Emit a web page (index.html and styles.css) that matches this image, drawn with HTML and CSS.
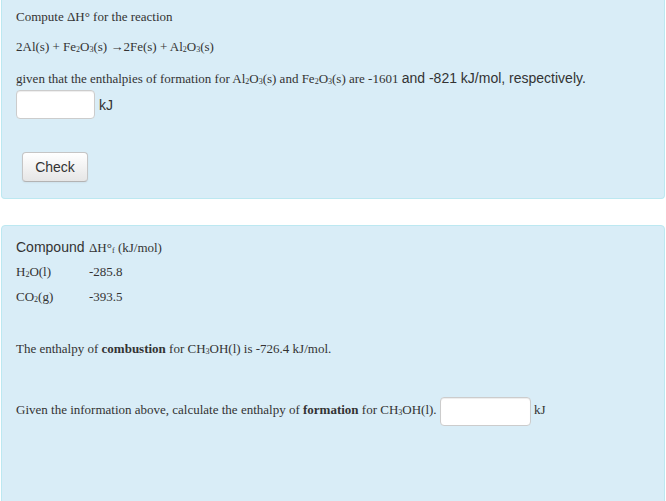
FILE: index.html
```html
<!DOCTYPE html>
<html lang="en">

<head>
    <meta charset="UTF-8">
    <meta name="viewport" content="width=device-width, initial-scale=1.0">
    <title>Enthalpy Problems</title>
    <link rel="stylesheet" href="styles.css">
</head>

<body>
    <div class="well first">
        <p>Compute &Delta;H&deg; for the reaction</p>
        <p>2Al(s) + Fe<sub>2</sub>O<sub>3</sub>(s) &rarr;2Fe(s) + Al<sub>2</sub>O<sub>3</sub>(s)</p>
        <p>given that the enthalpies of formation for Al<sub>2</sub>O<sub>3</sub>(s) and Fe<sub>2</sub>O<sub>3</sub>(s) are -1601 <span class="sans">and -821 kJ/mol, respectively.</span></p>
        <div class="answer">
            <input type="text" class="box">
            <span class="sans">kJ</span>
        </div>
        <button type="button" class="btn">Check</button>
    </div>

    <div class="well second">
        <table class="data">
            <tr>
                <th><span class="sans">Compound</span></th>
                <th>&Delta;H&deg;<sub>f</sub> (kJ/mol)</th>
            </tr>
            <tr>
                <td>H<sub>2</sub>O(l)</td>
                <td>-285.8</td>
            </tr>
            <tr>
                <td>CO<sub>2</sub>(g)</td>
                <td>-393.5</td>
            </tr>
        </table>
        <p class="gap">The enthalpy of <b>combustion</b> for CH<sub>3</sub>OH(l) is -726.4 kJ/mol.</p>
        <p>Given the information above, calculate the enthalpy of <b>formation</b> for CH<sub>3</sub>OH(l). <input type="text" class="box small"> kJ</p>
    </div>
</body>

</html>
```

FILE: styles.css
```css
html,
body {
    height: 100%;
    overflow: hidden;
}

body {
    margin: 0;
    padding: 0 1px;
    background-color: #fff;
    font-family: "Liberation Serif", "Times New Roman", serif;
    font-size: 13px;
    color: #333;
}

p {
    margin: 0 0 10px;
    line-height: 20px;
}

sub {
    font-size: 8px;
    vertical-align: baseline;
    position: relative;
    top: 1px;
}

.sans {
    font-family: "Liberation Sans", Arial, sans-serif;
    font-size: 14px;
    line-height: 1;
}

.well {
    background-color: #d9edf7;
    border: 1px solid #bce8f1;
    border-radius: 4px;
    padding: 7px 14px 17px;
}

.first {
    border-top: none;
    border-top-left-radius: 0;
    border-top-right-radius: 0;
    margin-bottom: 26px;
    box-sizing: border-box;
    height: 199px;
}

.second {
    height: 300px;
    padding-top: 11px;
}

.answer {
    display: flex;
    align-items: center;
    gap: 4px;
    margin-top: -11px;
}

.box {
    width: 79px;
    height: 29px;
    box-sizing: border-box;
    border: 1px solid #ccc;
    border-radius: 4px;
    background: #fff;
    padding: 4px 6px;
    margin: 0;
    box-shadow: inset 0 1px 1px rgba(0, 0, 0, 0.075);
}

.small {
    width: 91px;
    height: 29px;
    vertical-align: middle;
}

.btn {
    margin: 33px 0 0 6px;
    width: 66px;
    height: 30px;
    font-family: "Liberation Sans", Arial, sans-serif;
    font-size: 14px;
    color: #333;
    background-image: linear-gradient(#ffffff, #e6e6e6);
    border: 1px solid #c5c5c5;
    border-bottom-color: #b3b3b3;
    border-radius: 4px;
    box-shadow: inset 0 1px 0 rgba(255, 255, 255, 0.2), 0 1px 2px rgba(0, 0, 0, 0.05);
}

.data {
    border-collapse: collapse;
    margin-bottom: 30px;
}

.data th {
    font-weight: normal;
    text-align: left;
    padding: 0;
    height: 22px;
}

.data td {
    padding: 0;
    height: 25px;
}

.data td:first-child {
    width: 73px;
}

.gap {
    margin-bottom: 36px;
}
```
